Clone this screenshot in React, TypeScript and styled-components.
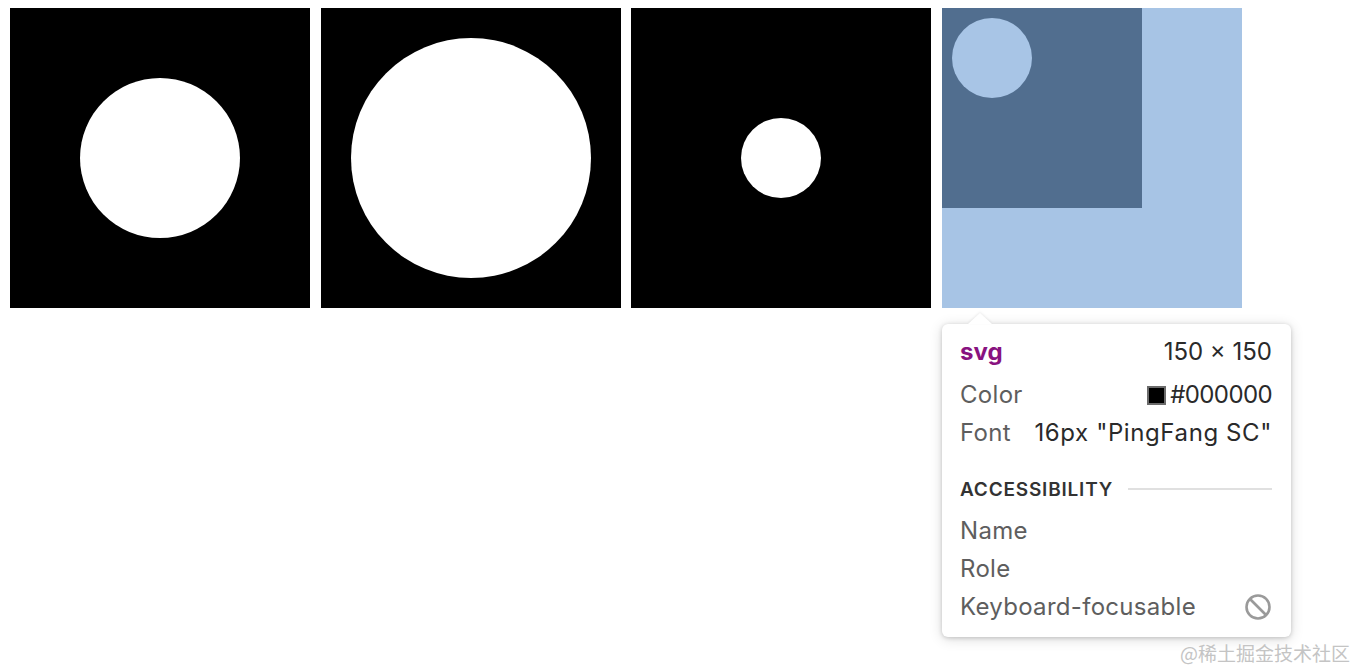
import React from "react";
import styled, { createGlobalStyle } from "styled-components";

const Global = createGlobalStyle`
  html, body { margin: 0; padding: 0; background: #fff; }
  body { font-family: Inter, "Liberation Sans", sans-serif; }
`;

const Page = styled.div`
  position: relative;
  width: 1358px;
  height: 670px;
  overflow: hidden;
  background: #fff;
`;

const Strip = styled.div`
  display: flex;
  gap: 10.67px;
  padding: 8px 0 0 10px;
`;

const Frame = styled.svg`
  display: block;
  width: 300px;
  height: 300px;
  flex: none;
`;

const Tooltip = styled.div`
  position: absolute;
  left: 942px;
  top: 324px;
  width: 349px;
  height: 313px;
  box-sizing: border-box;
  padding: 9px 19px 11px 18px;
  background: #fff;
  border-radius: 6px;
  box-shadow: 0 1px 4px rgba(0, 0, 0, 0.18), 0 2px 14px rgba(0, 0, 0, 0.14);
  &::before {
    content: "";
    position: absolute;
    left: 26px;
    top: -11px;
    width: 0;
    height: 0;
    border-left: 12px solid transparent;
    border-right: 12px solid transparent;
    border-bottom: 11px solid #fff;
    filter: drop-shadow(0 -1px 1px rgba(0, 0, 0, 0.08));
  }
`;

const Row = styled.div<{ $gapTop?: number }>`
  display: flex;
  align-items: center;
  justify-content: space-between;
  height: 38px;
  margin-top: ${(p) => p.$gapTop ?? 0}px;
  font-size: 24px;
  line-height: 38px;
  white-space: nowrap;
`;

const Tag = styled.span`
  color: #881280;
  font-weight: 700;
`;

const Label = styled.span`
  color: #5e5e5e;
  letter-spacing: 0.3px;
`;

const Value = styled.span<{ $spacing?: number }>`
  color: #2a2a2a;
  display: flex;
  align-items: center;
  gap: 4px;
  letter-spacing: ${(p) => p.$spacing ?? 0}px;
`;

const Swatch = styled.span`
  display: inline-block;
  width: 15px;
  height: 15px;
  background: #000;
  border: 2px solid #6b6b6b;
`;

const Section = styled.div`
  display: flex;
  align-items: center;
  gap: 15px;
  height: 30px;
  margin-top: 22px;
  margin-bottom: 8px;
  font-size: 19px;
  font-weight: 600;
  letter-spacing: 0.8px;
  color: #333;
`;

const Rule = styled.span`
  flex: 1;
  height: 2px;
  background: #e0e0e0;
`;

const Watermark = styled.div`
  position: absolute;
  right: 8px;
  bottom: 4px;
  font-family: "Noto Sans CJK SC", sans-serif;
  font-size: 19px;
  color: #c4c4c4;
  text-shadow: 0 0 1px rgba(255, 255, 255, 0.8);
`;

export default function App() {
  return (
    <Page>
      <Global />
      <Strip>
        <Frame viewBox="0 0 300 300">
          <rect width="300" height="300" fill="#000" />
          <circle cx="150" cy="150" r="80" fill="#fff" />
        </Frame>
        <Frame viewBox="0 0 300 300">
          <rect width="300" height="300" fill="#000" />
          <circle cx="150" cy="150" r="120" fill="#fff" />
        </Frame>
        <Frame viewBox="0 0 300 300">
          <rect width="300" height="300" fill="#000" />
          <circle cx="150" cy="150" r="40" fill="#fff" />
        </Frame>
        <Frame viewBox="0 0 300 300">
          <rect width="300" height="300" fill="#a7c4e5" />
          <rect width="200" height="200" fill="#516e8f" />
          <circle cx="50" cy="50" r="40" fill="#a8c5e6" />
        </Frame>
      </Strip>
      <Tooltip>
        <Row>
          <Tag>svg</Tag>
          <Value>150 × 150</Value>
        </Row>
        <Row $gapTop={5}>
          <Label>Color</Label>
          <Value $spacing={-0.6}>
            <Swatch />#000000
          </Value>
        </Row>
        <Row>
          <Label>Font</Label>
          <Value $spacing={0.6}>16px "PingFang SC"</Value>
        </Row>
        <Section>
          ACCESSIBILITY
          <Rule />
        </Section>
        <Row>
          <Label>Name</Label>
        </Row>
        <Row>
          <Label>Role</Label>
        </Row>
        <Row>
          <Label>Keyboard-focusable</Label>
          <svg width="28" height="28" viewBox="0 0 28 28">
            <circle cx="14" cy="14" r="11.5" fill="none" stroke="#9a9a9a" strokeWidth="2.6" />
            <line x1="6" y1="6" x2="22" y2="22" stroke="#9a9a9a" strokeWidth="2.6" />
          </svg>
        </Row>
      </Tooltip>
      <Watermark>@稀土掘金技术社区</Watermark>
    </Page>
  );
}
